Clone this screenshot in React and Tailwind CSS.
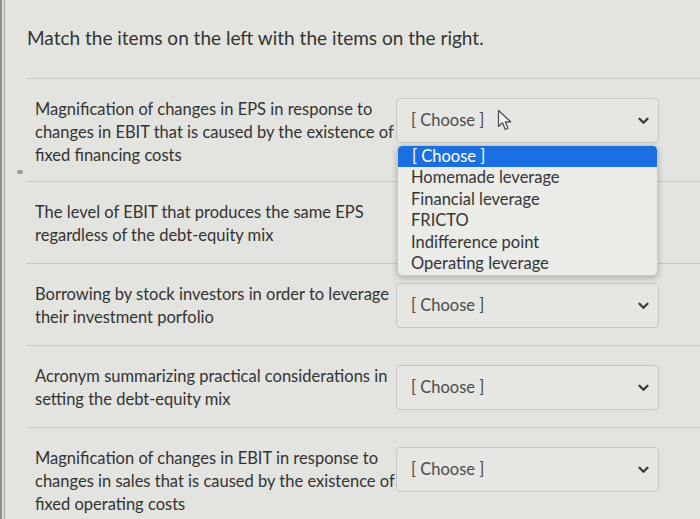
import React from "react";

const rows = [
  {
    text: "Magnification of changes in EPS in response to changes in EBIT that is caused by the existence of fixed financing costs",
    open: true,
  },
  { text: "The level of EBIT that produces the same EPS regardless of the debt-equity mix", none: true },
  { text: "Borrowing by stock investors in order to leverage their investment porfolio" },
  { text: "Acronym summarizing practical considerations in setting the debt-equity mix" },
  {
    text: "Magnification of changes in EBIT in response to changes in sales that is caused by the existence of fixed operating costs",
  },
];

const options = [
  "Homemade leverage",
  "Financial leverage",
  "FRICTO",
  "Indifference point",
  "Operating leverage",
];

function Chevron() {
  return (
    <svg width="11" height="8" viewBox="0 0 11 8" className="shrink-0">
      <path d="M1.5 1.8 L5.5 5.8 L9.5 1.8" fill="none" stroke="#3a3a3a" strokeWidth="2.3" strokeLinecap="round" strokeLinejoin="round" />
    </svg>
  );
}

function Cursor() {
  return (
    <svg width="16" height="23" viewBox="0 0 16 23" className="absolute left-[101px] top-[11px]">
      <path d="M1.5 1.5 L1.5 17.5 L5.5 13.8 L8.3 20.5 L11 19.3 L8.3 12.8 L13.8 12.8 Z" fill="#f2f2f0" stroke="#4a4a4a" strokeWidth="1.2" strokeLinejoin="round" />
    </svg>
  );
}

function Select({ open }) {
  return (
    <div className="relative w-[263px] shrink-0">
      <div className="h-[45px] flex items-center justify-between pl-[14px] pr-[9px] border border-[#c6c6c2] rounded-[4px] bg-[#e6e6e2]">
        <span className="text-[16.5px] leading-[23px] text-[#4c4c4c]">[ Choose ]</span>
        <Chevron />
      </div>
      {open && <Cursor />}
      {open && (
        <div className="absolute left-[1px] top-[47px] w-[261px] z-10 bg-[#ebebe8] border border-[#c8c8c4] rounded-[5px] shadow-[0_2px_6px_rgba(0,0,0,0.25)] overflow-hidden">
          <div className="h-[21px] leading-[21px] pl-[14px] bg-[#1c6fe0] text-white text-[16.5px] rounded-t-[4px]">[ Choose ]</div>
          {options.map((o) => (
            <div key={o} className="h-[21.6px] leading-[21.6px] pl-[13px] text-[16.5px] text-[#353535]">
              {o}
            </div>
          ))}
        </div>
      )}
    </div>
  );
}

export default function App() {
  return (
    <div className="w-[700px] h-[519px] overflow-hidden bg-[#e3e3df] flex font-['Lato',sans-serif] text-[#333333]">
      <div className="w-[5px] shrink-0 border-l-[2px] border-r border-l-[#8e8e8a] border-r-[#a8a8a4] bg-[#dcdcd8]" />
      <div className="flex-1 pl-[22px] relative">
        <span className="absolute left-[12px] top-[170px] w-[6px] h-[4px] rounded-full bg-[#9a9a96]" />
        <h2 className="pt-[26px] pb-[28px] text-[19px] leading-[24px] text-[#333333]">
          Match the items on the left with the items on the right.
        </h2>
        {rows.map((r, i) => (
          <div
            key={i}
            className={`flex items-start border-t border-[#c9c9c5] pl-[8px] pt-[19px] ${i === 0 ? "pb-[14px]" : "pb-[16px]"}`}
          >
            <p className="w-[361px] shrink-0 text-[16.5px] leading-[23px]">{r.text}</p>
            {r.none ? <div className="w-[263px] h-[45px]" /> : <Select open={r.open} />}
          </div>
        ))}
      </div>
    </div>
  );
}
